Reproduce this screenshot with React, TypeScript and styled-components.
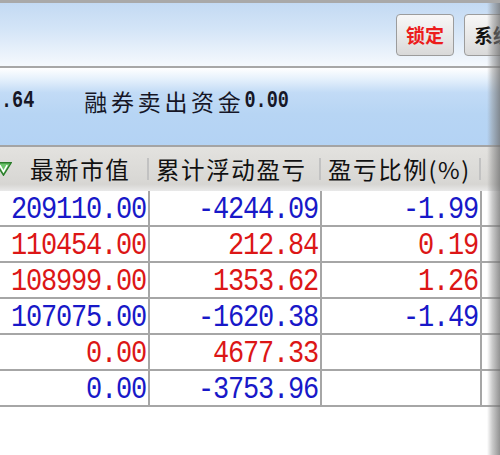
import React from "react";
import styled, { createGlobalStyle } from "styled-components";

const rows = [
  { value: "209110.00", profit: "-4244.09", ratio: "-1.99", up: false, profitUp: false },
  { value: "110454.00", profit: "212.84", ratio: "0.19", up: true, profitUp: true },
  { value: "108999.00", profit: "1353.62", ratio: "1.26", up: true, profitUp: true },
  { value: "107075.00", profit: "-1620.38", ratio: "-1.49", up: false, profitUp: false },
  { value: "0.00", profit: "4677.33", ratio: "", up: true, profitUp: true },
  { value: "0.00", profit: "-3753.96", ratio: "", up: false, profitUp: false },
];

const headers = ["累计浮动盈亏", "盈亏比例(%)"];

const App = () => {
  return (
    <Page>
      <GlobalStyle />
      <Toolbar>
        <ButtonGroup>
          <ToolButton $danger>锁定</ToolButton>
          <ToolButton>系统</ToolButton>
        </ButtonGroup>
      </Toolbar>

      <InfoBar>
        <InfoNumber>.64</InfoNumber>
        <InfoItem>
          <InfoLabel>融券卖出资金</InfoLabel>
          <InfoNumber>0.00</InfoNumber>
        </InfoItem>
      </InfoBar>

      <Table>
        <HeaderCell>
          <SortIcon width="17" height="14" viewBox="0 0 17 14">
            <polygon points="0.8,0.8 16.2,0.8 8.5,13.2" fill="#6cc46c" stroke="#2b7d2b" strokeWidth="1.4" />
            <polyline points="4.8,3.2 8.5,9.6 12.2,3.2" fill="none" stroke="#ffffff" strokeWidth="1.6" />
          </SortIcon>
          最新市值
        </HeaderCell>
        {headers.map((h) => (
          <HeaderCell key={h}>{h}</HeaderCell>
        ))}
        <HeaderCell $last />

        {rows.map((r, i) => (
          <React.Fragment key={i}>
            <Cell $up={r.up}>
              <Value>{r.value}</Value>
            </Cell>
            <Cell $up={r.profitUp}>
              <Value>{r.profit}</Value>
            </Cell>
            <Cell $up={r.profitUp}>
              <Value>{r.ratio}</Value>
            </Cell>
            <Cell $last />
          </React.Fragment>
        ))}
      </Table>

      <EdgeShade />
    </Page>
  );
};

export default App;

// Styled Components

const GlobalStyle = createGlobalStyle`
  html, body {
    margin: 0;
    padding: 0;
    background: #ffffff;
  }

  body {
    font-family: "Liberation Mono", "Noto Sans CJK SC", monospace;
  }
`;

const Page = styled.div`
  position: relative;
  width: 500px;
  height: 455px;
  overflow: hidden;
  background: #ffffff;
  border-top: 3px solid #a9a9a9;
  box-sizing: border-box;
`;

const Toolbar = styled.div`
  height: 63px;
  display: flex;
  align-items: center;
  background: linear-gradient(#c3daf3 0%, #d3e4f7 40%, #eaf2fb 80%, #f5f9fd 100%);
  border-bottom: 2px solid #a7a7a7;
`;

const ButtonGroup = styled.div`
  margin-left: auto;
  margin-right: -22px;
  display: flex;
  gap: 10px;
`;

const ToolButton = styled.div<{ $danger?: boolean }>`
  width: 56px;
  height: 40px;
  display: flex;
  align-items: center;
  justify-content: center;
  border: 1px solid #9c9c9c;
  border-radius: 4px;
  background: linear-gradient(#f7f7f7, #e6e6e6 60%, #d9d9d9);
  font-family: "Noto Sans CJK SC", sans-serif;
  font-size: 19px;
  font-weight: 700;
  color: ${(p) => (p.$danger ? "#ec1c1c" : "#111111")};
`;

const InfoBar = styled.div`
  height: 79px;
  box-sizing: border-box;
  display: flex;
  align-items: flex-start;
  gap: 50px;
  padding: 18px 0 0 1px;
  background: linear-gradient(#ffffff 0%, #e6f1fc 14%, #c2dbf6 32%, #b7d5f4 60%, #b4d3f4 100%);
  border-bottom: 2px solid #a4a4a4;
  color: #161626;
`;

const InfoItem = styled.div`
  display: flex;
  align-items: center;
`;

const InfoLabel = styled.span`
  font-family: "Noto Sans CJK SC", sans-serif;
  font-size: 23px;
  letter-spacing: 3.7px;
  line-height: 30px;
`;

const InfoNumber = styled.span`
  display: inline-block;
  font-family: "Liberation Mono", monospace;
  font-size: 18.5px;
  line-height: 30px;
  font-weight: 700;
  transform: translateY(1px) scaleY(1.25);
`;

const Table = styled.div`
  display: grid;
  grid-template-columns: 150px 172px 160px 1fr;
  grid-auto-rows: 36px;
  grid-template-rows: 44px;
`;

const HeaderCell = styled.div<{ $last?: boolean }>`
  position: relative;
  display: flex;
  align-items: center;
  padding-left: 6px;
  background: linear-gradient(#e3e2df, #d7d6d3 85%, #e9e9e9);
  font-family: "Noto Sans CJK SC", sans-serif;
  font-size: 23.5px;
  letter-spacing: 1.6px;
  color: #111111;
  white-space: nowrap;

  &:first-child {
    padding-left: 0;
  }

  &::after {
    content: "";
    display: ${(p) => (p.$last ? "none" : "block")};
    position: absolute;
    right: 1px;
    top: 11px;
    width: 2px;
    height: 22px;
    background: #c2c2c2;
  }
`;

const SortIcon = styled.svg`
  margin-left: -5px;
  margin-right: 18px;
  flex-shrink: 0;
`;

const Cell = styled.div<{ $up?: boolean; $last?: boolean }>`
  display: flex;
  align-items: center;
  justify-content: flex-end;
  padding-right: ${(p) => (p.$last ? "0" : "2px")};
  border-bottom: 2px solid #a6a6a6;
  border-right: ${(p) => (p.$last ? "none" : "2px solid #a6a6a6")};
  font-family: "Liberation Mono", monospace;
  font-size: 27px;
  letter-spacing: -1.2px;
  color: ${(p) => (p.$up ? "#dc1616" : "#1818c8")};
`;

const Value = styled.span`
  display: inline-block;
  transform: translateY(2px) scaleY(1.16);
`;

const EdgeShade = styled.div`
  position: absolute;
  top: 0;
  right: 0;
  width: 13px;
  height: 100%;
  background: linear-gradient(to right, rgba(150, 150, 150, 0), rgba(140, 140, 140, 0.45) 40%, rgba(110, 110, 110, 0.75));
  pointer-events: none;
`;
